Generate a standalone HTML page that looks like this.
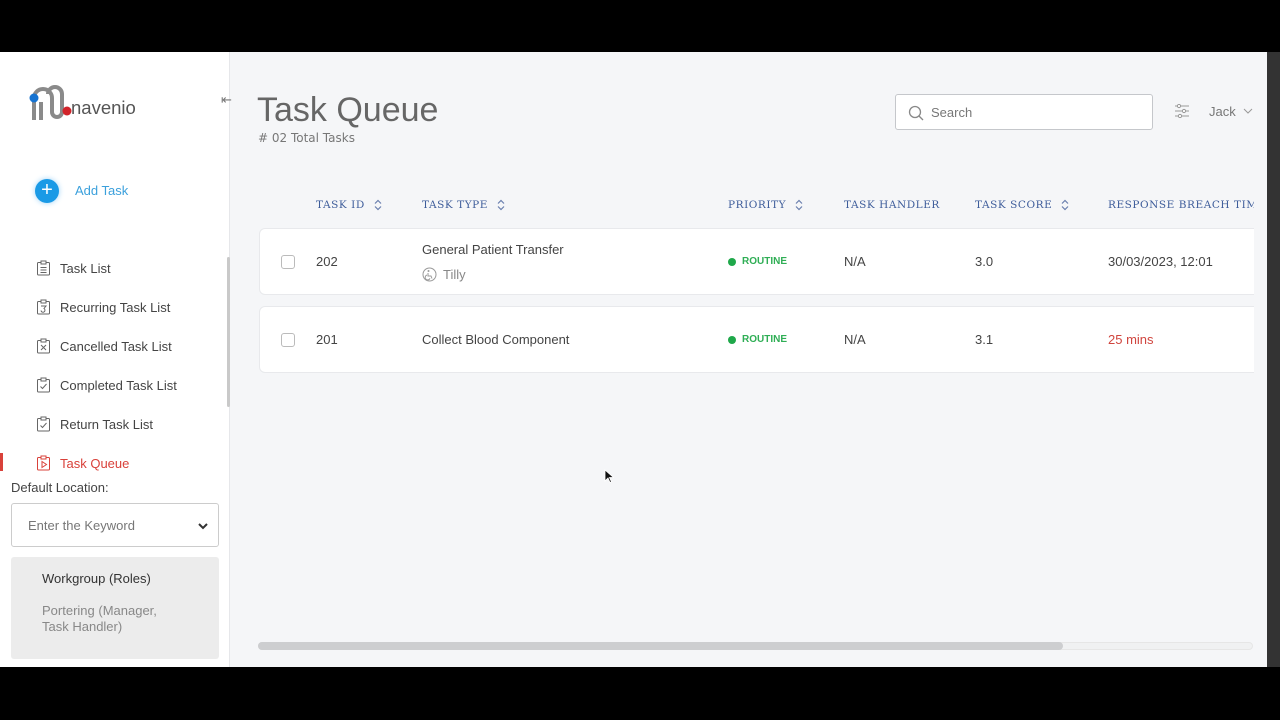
<!DOCTYPE html>
<html><head><meta charset="utf-8"><style>
*{box-sizing:border-box;margin:0;padding:0}
body{width:1280px;height:720px;background:#000;position:relative;overflow:hidden;font-family:"Liberation Sans",sans-serif}
#app{position:absolute;left:0;top:52px;width:1267px;height:615px;background:#f5f6f8;overflow:hidden}
#strip{position:absolute;left:1267px;top:52px;width:13px;height:615px;background:#333}
#side{position:absolute;left:0;top:0;width:230px;height:615px;background:#fff;border-right:1px solid #e6e7ea}
.abs{position:absolute}
.nav{position:absolute;left:36px;font-size:13px;color:#444;display:flex;align-items:center}
.nav svg{margin-right:9px}
.hdr{position:absolute;top:147px;font-family:"DejaVu Serif",serif;font-size:10.5px;letter-spacing:0.55px;color:#3d5c9a;display:flex;align-items:center;white-space:nowrap}
.hdr svg{margin-left:9px}
#clip{position:absolute;left:0;top:0;width:1254px;height:615px;overflow:hidden}
.row{position:absolute;left:259px;width:1010px;background:#fff;border:1px solid #e8e9ec;border-radius:6px}
.t{position:absolute;font-size:13px;color:#444}
.cb{position:absolute;left:21px;width:14px;height:14px;border:1px solid #bbb;border-radius:3px}
.rt{position:absolute;left:468px;font-size:10px;font-weight:bold;color:#2fae55;display:flex;align-items:center}
.rt:before{content:"";width:8px;height:8px;border-radius:50%;background:#1fa84a;margin-right:6px}
</style></head><body>
<div id="app">
 <div id="side">
  <svg class="abs" style="left:27px;top:30px" width="46" height="42" viewBox="0 0 46 42">
   <path d="M7 38 V16 a9 9 0 0 1 18 0 V30 a5 5 0 0 0 10 0 V12 a7 7 0 0 0 -14 0" fill="none" stroke="#8a8a8a" stroke-width="4"/>
   <path d="M14 38 V20" stroke="#8a8a8a" stroke-width="4"/>
   <circle cx="7" cy="16" r="4.5" fill="#1673d1"/>
   <circle cx="40" cy="29" r="4.5" fill="#d2232a"/>
  </svg>
  <div class="abs" style="left:71px;top:45px;font-size:18.5px;color:#555">navenio</div>
  <div class="abs" style="left:221px;top:40px;font-size:13px;color:#777">⇤</div>
  <div class="abs" style="left:35px;top:127px;width:24px;height:24px;border-radius:50%;background:#1a9ae6;color:#fff;font-size:20px;line-height:23px;text-align:center;box-shadow:0 0 6px #9fd3f7">+</div>
  <div class="abs" style="left:75px;top:131px;font-size:13px;color:#3ba0dc">Add Task</div>
  <div class="abs" style="left:227px;top:205px;width:3px;height:150px;background:#c9c9c9;border-radius:2px"></div>
  <div class="nav" style="top:208px"><svg width="15" height="16"><rect x="1.5" y="2.5" width="12" height="12.5" rx="1" fill="none" stroke="#666"/><rect x="5" y="1" width="5" height="3" fill="#fff" stroke="#666"/><path d="M4.5 7.5h6M4.5 10h6M4.5 12.5h6" stroke="#666"/></svg>Task List</div>
  <div class="nav" style="top:247px"><svg width="15" height="16"><rect x="1.5" y="2.5" width="12" height="12.5" rx="1" fill="none" stroke="#666"/><rect x="5" y="1" width="5" height="3" fill="#fff" stroke="#666"/><path d="M5 7h5l-2 2.5a2 2 0 1 1 -3 2" fill="none" stroke="#666"/></svg>Recurring Task List</div>
  <div class="nav" style="top:286px"><svg width="15" height="16"><rect x="1.5" y="2.5" width="12" height="12.5" rx="1" fill="none" stroke="#666"/><rect x="5" y="1" width="5" height="3" fill="#fff" stroke="#666"/><path d="M5 7l5 5M10 7l-5 5" stroke="#666"/></svg>Cancelled Task List</div>
  <div class="nav" style="top:325px"><svg width="15" height="16"><rect x="1.5" y="2.5" width="12" height="12.5" rx="1" fill="none" stroke="#666"/><rect x="5" y="1" width="5" height="3" fill="#fff" stroke="#666"/><path d="M4.5 9.5l2 2 4-4.5" fill="none" stroke="#666"/></svg>Completed Task List</div>
  <div class="nav" style="top:364px"><svg width="15" height="16"><rect x="1.5" y="2.5" width="12" height="12.5" rx="1" fill="none" stroke="#666"/><rect x="5" y="1" width="5" height="3" fill="#fff" stroke="#666"/><path d="M4.5 9.5l2 2 4-4.5" fill="none" stroke="#666"/></svg>Return Task List</div>
  <div class="abs" style="left:0;top:401px;width:3px;height:18px;background:#d9413a"></div>
  <div class="nav" style="top:403px;color:#d9413a"><svg width="15" height="16"><rect x="1.5" y="2.5" width="12" height="12.5" rx="1" fill="none" stroke="#d9413a"/><rect x="5" y="1" width="5" height="3" fill="#fff" stroke="#d9413a"/><path d="M6 6.5v6l4.5-3z" fill="none" stroke="#d9413a"/></svg>Task Queue</div>
  <div class="abs" style="left:11px;top:428px;font-size:13px;color:#444">Default Location:</div>
  <div class="abs" style="left:11px;top:451px;width:208px;height:44px;border:1px solid #ccc;border-radius:3px;background:#fff"><span class="abs" style="left:16px;top:14px;font-size:13px;color:#777">Enter the Keyword</span><svg class="abs" style="left:185px;top:17px" width="12" height="10"><path d="M2 3l4 4 4-4" fill="none" stroke="#333" stroke-width="2"/></svg></div>
  <div class="abs" style="left:11px;top:505px;width:208px;height:102px;background:#ececec;border-radius:3px">
   <div class="abs" style="left:31px;top:14px;font-size:13px;color:#333">Workgroup (Roles)</div>
   <div class="abs" style="left:31px;top:46px;font-size:13px;color:#888;line-height:16px">Portering (Manager,<br>Task Handler)</div>
  </div>
 </div>
 <div class="abs" style="left:257px;top:39px;font-size:34px;color:#666">Task Queue</div>
 <div class="abs" style="left:258px;top:79px;font-family:'DejaVu Sans',sans-serif;font-size:12px;color:#777">#&nbsp;02 Total Tasks</div>
 <div class="abs" style="left:895px;top:42px;width:258px;height:36px;border:1px solid #c5c7cb;border-radius:3px;background:#fff"><svg class="abs" style="left:12px;top:10px" width="16" height="16"><circle cx="7" cy="7" r="5.5" fill="none" stroke="#888" stroke-width="1.3"/><path d="M11 11l4 4" stroke="#888" stroke-width="1.3"/></svg><span class="abs" style="left:35px;top:10px;font-size:13px;color:#777">Search</span></div>
 <svg class="abs" style="left:1174px;top:52px" width="16" height="14"><path d="M1 2h14M1 7h14M1 12h14" stroke="#999"/><circle cx="5" cy="2" r="1.6" fill="#fff" stroke="#999"/><circle cx="10" cy="7" r="1.6" fill="#fff" stroke="#999"/><circle cx="6" cy="12" r="1.6" fill="#fff" stroke="#999"/></svg>
 <div class="abs" style="left:1209px;top:52px;font-size:13px;color:#777">Jack</div>
 <svg class="abs" style="left:1243px;top:56px" width="10" height="7"><path d="M1 1l4 4 4-4" fill="none" stroke="#999"/></svg>
 <div id="clip">
 <div class="hdr" style="left:316px">TASK ID<svg width="8" height="12"><path d="M1 4.5l3-3 3 3M1 7.5l3 3 3-3" fill="none" stroke="#6a7fae" stroke-width="1.2"/></svg></div>
 <div class="hdr" style="left:422px">TASK TYPE<svg width="8" height="12"><path d="M1 4.5l3-3 3 3M1 7.5l3 3 3-3" fill="none" stroke="#6a7fae" stroke-width="1.2"/></svg></div>
 <div class="hdr" style="left:728px">PRIORITY<svg width="8" height="12"><path d="M1 4.5l3-3 3 3M1 7.5l3 3 3-3" fill="none" stroke="#6a7fae" stroke-width="1.2"/></svg></div>
 <div class="hdr" style="left:844px">TASK HANDLER</div>
 <div class="hdr" style="left:975px">TASK SCORE<svg width="8" height="12"><path d="M1 4.5l3-3 3 3M1 7.5l3 3 3-3" fill="none" stroke="#6a7fae" stroke-width="1.2"/></svg></div>
 <div class="hdr" style="left:1108px">RESPONSE BREACH TIME</div>
 <div class="row" style="top:176px;height:67px">
  <div class="cb" style="top:26px"></div>
  <div class="t" style="left:56px;top:25px">202</div>
  <div class="t" style="left:162px;top:13px">General Patient Transfer</div>
  <svg class="abs" style="left:162px;top:38px" width="15" height="15"><circle cx="7.5" cy="7.5" r="6.5" fill="none" stroke="#999"/><circle cx="6.5" cy="4" r="1" fill="#999"/><path d="M6 6v3h3l1 2.5M5 8a2.5 2.5 0 1 0 3 3.3" fill="none" stroke="#999"/></svg>
  <div class="t" style="left:183px;top:38px;color:#888">Tilly</div>
  <div class="rt" style="top:27px">ROUTINE</div>
  <div class="t" style="left:584px;top:25px">N/A</div>
  <div class="t" style="left:715px;top:25px">3.0</div>
  <div class="t" style="left:848px;top:25px">30/03/2023, 12:01</div>
 </div>
 <div class="row" style="top:254px;height:67px">
  <div class="cb" style="top:26px"></div>
  <div class="t" style="left:56px;top:25px">201</div>
  <div class="t" style="left:162px;top:25px">Collect Blood Component</div>
  <div class="rt" style="top:27px">ROUTINE</div>
  <div class="t" style="left:584px;top:25px">N/A</div>
  <div class="t" style="left:715px;top:25px">3.1</div>
  <div class="t" style="left:848px;top:25px;color:#d0453e">25 mins</div>
 </div>
 </div>
 <div class="abs" style="left:258px;top:590px;width:995px;height:8px;border-radius:4px;background:#f0f1f2;border:1px solid #e6e6e6"></div>
 <div class="abs" style="left:258px;top:590px;width:805px;height:8px;border-radius:4px;background:#cdced0"></div>
 <svg class="abs" style="left:604px;top:417px" width="10" height="15"><path d="M1 1v11l3-3 2 4.5 1.5-.7-2-4.3h4z" fill="#111" stroke="#fff" stroke-width=".8"/></svg>
</div>
<div id="strip"></div>
</body></html>
